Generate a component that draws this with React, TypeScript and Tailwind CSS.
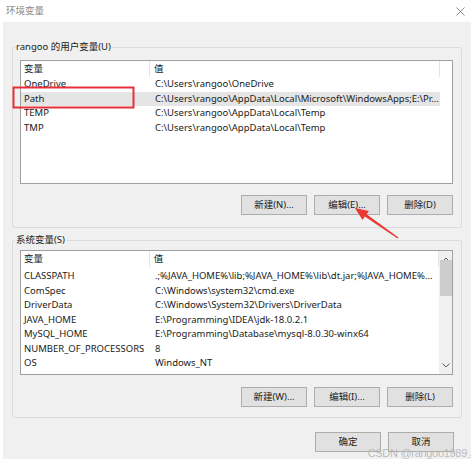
import React from 'react';

type Row = { name: string; value: string; selected?: boolean };

const userVars: Row[] = [
  { name: 'OneDrive', value: 'C:\\Users\\rangoo\\OneDrive' },
  { name: 'Path', value: 'C:\\Users\\rangoo\\AppData\\Local\\Microsoft\\WindowsApps;E:\\Pr...', selected: true },
  { name: 'TEMP', value: 'C:\\Users\\rangoo\\AppData\\Local\\Temp' },
  { name: 'TMP', value: 'C:\\Users\\rangoo\\AppData\\Local\\Temp' },
];

const systemVars: Row[] = [
  { name: 'CLASSPATH', value: '.;%JAVA_HOME%\\lib;%JAVA_HOME%\\lib\\dt.jar;%JAVA_HOME%...' },
  { name: 'ComSpec', value: 'C:\\Windows\\system32\\cmd.exe' },
  { name: 'DriverData', value: 'C:\\Windows\\System32\\Drivers\\DriverData' },
  { name: 'JAVA_HOME', value: 'E:\\Programming\\IDEA\\jdk-18.0.2.1' },
  { name: 'MySQL_HOME', value: 'E:\\Programming\\Database\\mysql-8.0.30-winx64' },
  { name: 'NUMBER_OF_PROCESSORS', value: '8' },
  { name: 'OS', value: 'Windows_NT' },
  { name: 'Path', value: 'E:\\Programming\\Python\\Python310\\Scripts\\;E:\\Programming\\...' },
];

const Button = ({ label }: { label: string }) => (
  <button className="w-[66px] h-[20px] bg-[#e1e1e1] border border-[#adadad] text-[#222] flex items-center justify-center">
    {label}
  </button>
);

const Header = () => (
  <div className="flex h-[16px] items-center shrink-0">
    <div className="w-[129px] h-full pl-[3px] flex items-center border-r border-[#e5e5e5]">变量</div>
    <div className="w-[290px] h-full pl-[4px] flex items-center border-r border-[#e5e5e5]">值</div>
  </div>
);

const ListRow = ({ row }: { row: Row }) => (
  <div className={`flex h-[14.5px] items-center w-[419px] shrink-0 ${row.selected ? 'bg-[#e5e5e5]' : ''}`}>
    <div className="w-[129px] pl-[3px] whitespace-nowrap overflow-hidden">{row.name}</div>
    <div className="w-[290px] pl-[5px] whitespace-nowrap overflow-hidden">{row.value}</div>
  </div>
);

const App = () => {
  return (
    <div className="w-[474px] h-[463px] bg-white relative overflow-hidden font-['Noto_Sans','Noto_Sans_CJK_SC',sans-serif] text-[9.5px] text-[#1a1a1a]">
      {/* title bar */}
      <div className="h-[22px] flex items-center justify-between pl-[6px] pr-[9px] text-[#8a8a8a]">
        <span>环境变量</span>
        <svg width="9" height="9" viewBox="0 0 9 9">
          <path d="M0.5 0.5 L8.5 8.5 M8.5 0.5 L0.5 8.5" stroke="#808080" strokeWidth="0.9" />
        </svg>
      </div>

      <div className="mx-[3px] h-[437px] bg-[#f0f0f0] pt-[17px] px-[9px] flex flex-col">
        <fieldset className="border border-[#dcdcdc] rounded-[2px] pl-[7px] pr-[8px] pb-[12px] min-w-0">
          <legend className="-ml-[5px] px-[1px] leading-[16px]">rangoo 的用户变量(U)</legend>
          <div className="mt-[5px] h-[124px] bg-white border border-[#a0a0a0] flex flex-col overflow-hidden">
            <Header />
            {userVars.map((r) => (
              <ListRow key={r.name} row={r} />
            ))}
          </div>
          <div className="mt-[11px] flex justify-end gap-[7px]">
            <Button label="新建(N)..." />
            <Button label="编辑(E)..." />
            <Button label="删除(D)" />
          </div>
        </fieldset>

        <fieldset className="mt-[4px] border border-[#dcdcdc] rounded-[2px] pl-[7px] pr-[8px] pb-[10px] min-w-0">
          <legend className="-ml-[5px] px-[1px] leading-[16px]">系统变量(S)</legend>
          <div className="mt-[2px] h-[125px] bg-white border border-[#a0a0a0] flex overflow-hidden">
            <div className="flex-1 flex flex-col overflow-hidden">
              <Header />
              <div className="h-[2px] shrink-0" />
              {systemVars.map((r) => (
                <ListRow key={r.name} row={r} />
              ))}
            </div>
            <div className="w-[13px] bg-[#f0f0f0] flex flex-col items-center justify-between py-[6px]">
              <svg width="8" height="5" viewBox="0 0 8 5">
                <path d="M0.5 4.5 L4 1 L7.5 4.5" fill="none" stroke="#606060" strokeWidth="1" />
              </svg>
              <div className="w-[12px] h-[36px] bg-[#cdcdcd] -mt-[70px]" />
              <svg width="8" height="5" viewBox="0 0 8 5">
                <path d="M0.5 0.5 L4 4 L7.5 0.5" fill="none" stroke="#606060" strokeWidth="1" />
              </svg>
            </div>
          </div>
          <div className="mt-[12px] flex justify-end gap-[7px]">
            <Button label="新建(W)..." />
            <Button label="编辑(I)..." />
            <Button label="删除(L)" />
          </div>
        </fieldset>

        <div className="mt-[14px] flex justify-end gap-[7px] pr-[8px]">
          <Button label="确定" />
          <Button label="取消" />
        </div>
      </div>

      {/* annotations */}
      <svg className="absolute inset-0 pointer-events-none" width="474" height="463">
        <rect x="13.5" y="87.5" width="120" height="20" fill="none" stroke="#e53238" strokeWidth="2" />
        <polygon
          points="398.4,237.5 366.6,214.2 368.9,210.9 355,208 362.5,219.9 364.8,216.6 397.6,238.5"
          fill="#e8392f"
        />
        <g fill="#c8c8c8">
          <rect x="470" y="455" width="1" height="1" />
          <rect x="468" y="457" width="1" height="1" />
          <rect x="470" y="457" width="1" height="1" />
        </g>
      </svg>
      <div className="absolute right-[7px] bottom-[4px] text-[11px] leading-[12px] tracking-[-0.3px] text-[#b4b4b4]/90 font-['Liberation_Sans',sans-serif]">
        CSDN @rangoo1989
      </div>
    </div>
  );
};

export default App;
